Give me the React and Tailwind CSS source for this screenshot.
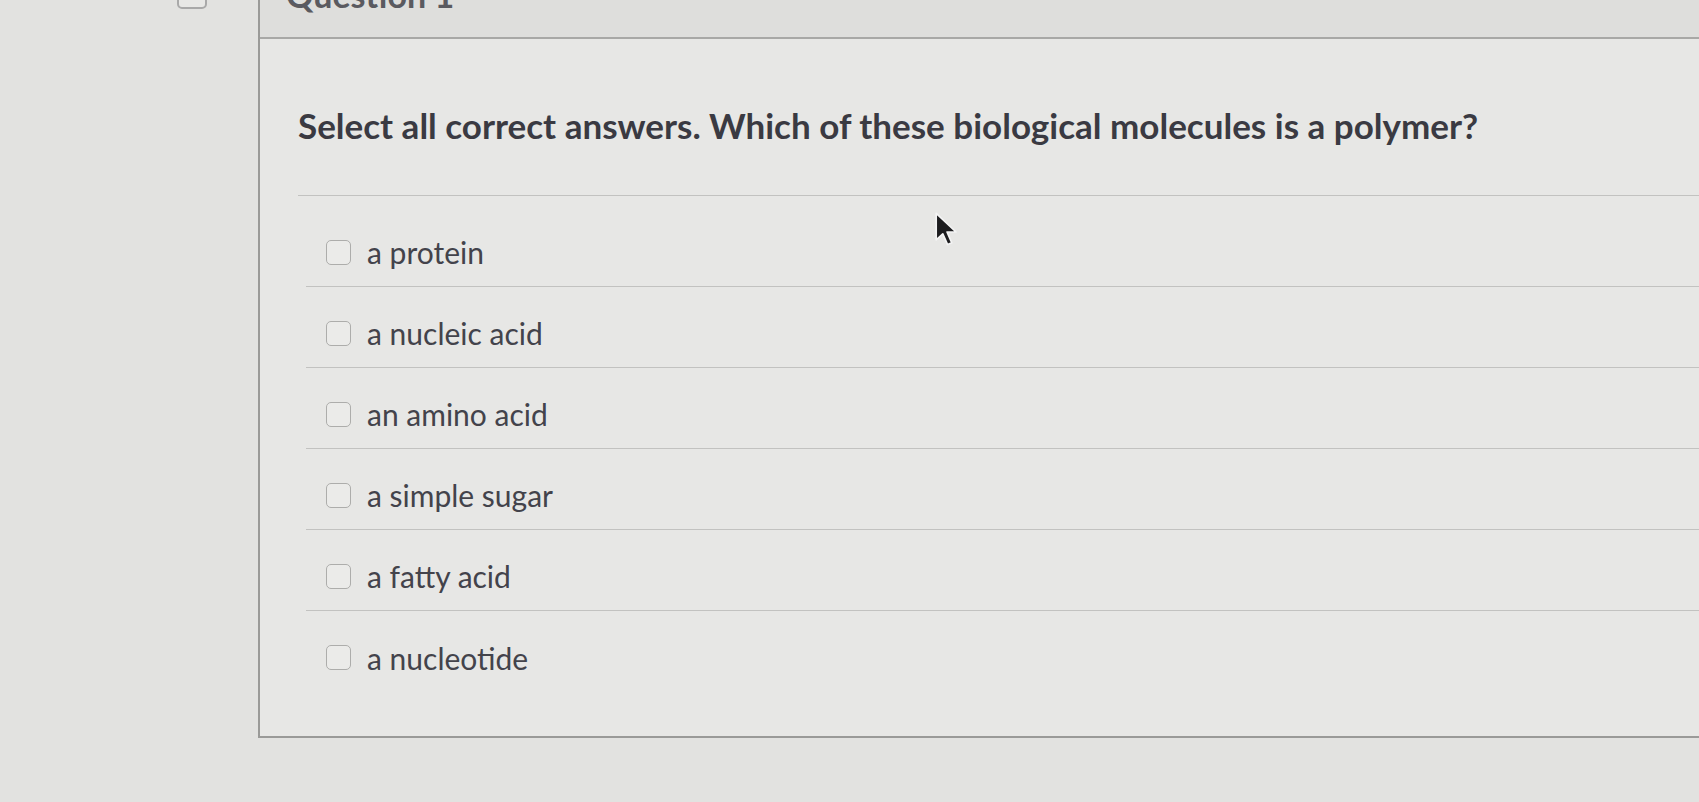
import React from 'react';

const options = [
  'a protein',
  'a nucleic acid',
  'an amino acid',
  'a simple sugar',
  'a fatty acid',
  'a nucleotide',
];

function Cursor() {
  return (
    <svg width="28" height="36" viewBox="0 0 22 30" className="absolute left-[933px] top-[211px]">
      <path d="M2 2 L2 24 L7.5 19 L11.5 28 L15 26.5 L11 17.5 L18.5 17.5 Z" fill="#1c1c1e" stroke="#f4f4f4" strokeWidth="1.4" strokeLinejoin="round" />
    </svg>
  );
}

export default function App() {
  return (
    <div className="relative w-[1699px] h-[802px] overflow-hidden bg-[#e2e2e0] flex font-['Lato','Noto_Sans',sans-serif]">
      {/* left rail */}
      <div className="w-[258px] shrink-0">
        <div className="ml-[177px] -mt-[22px] w-[30px] h-[31px] rounded-[5px] border-2 border-[#a9a9a9] bg-[#e8e8e6]" />
      </div>

      {/* question panel */}
      <div className="flex-1 h-[738px] border-l-2 border-b-2 border-[#9a9a98] bg-[#e7e7e5] flex flex-col">
        {/* header */}
        <div className="h-[39px] shrink-0 bg-[#dededc] border-b-2 border-[#a8a8a6] overflow-hidden">
          <div className="pl-[26px] -mt-[22px] text-[34px] leading-[34px] font-bold text-[#5a5a60]">Question 1</div>
        </div>

        {/* body */}
        <div className="pl-[38px] pt-[65px]">
          <h1 className="text-[35px] leading-[42px] font-bold text-[#3a3a42]">
            Select all correct answers. Which of these biological molecules is a polymer?
          </h1>
          <div className="mt-[49px] border-t border-[#c2c2c0]" />

          <ul className="mt-[10px] pl-[8px]">
            {options.map((opt, idx) => (
              <li
                key={opt}
                className={`h-[81px] pt-[12px] flex items-center gap-[16px] pl-[20px] ${idx < options.length - 1 ? 'border-b border-[#c2c2c0]' : ''}`}
              >
                <span className="w-[25px] h-[25px] rounded-[5px] border-[1.5px] border-[#adadab] bg-[#ebebe9] shrink-0" />
                <span className="text-[30px] leading-[36px] text-[#43434b]">{opt}</span>
              </li>
            ))}
          </ul>
        </div>
      </div>

      <Cursor />
    </div>
  );
}
